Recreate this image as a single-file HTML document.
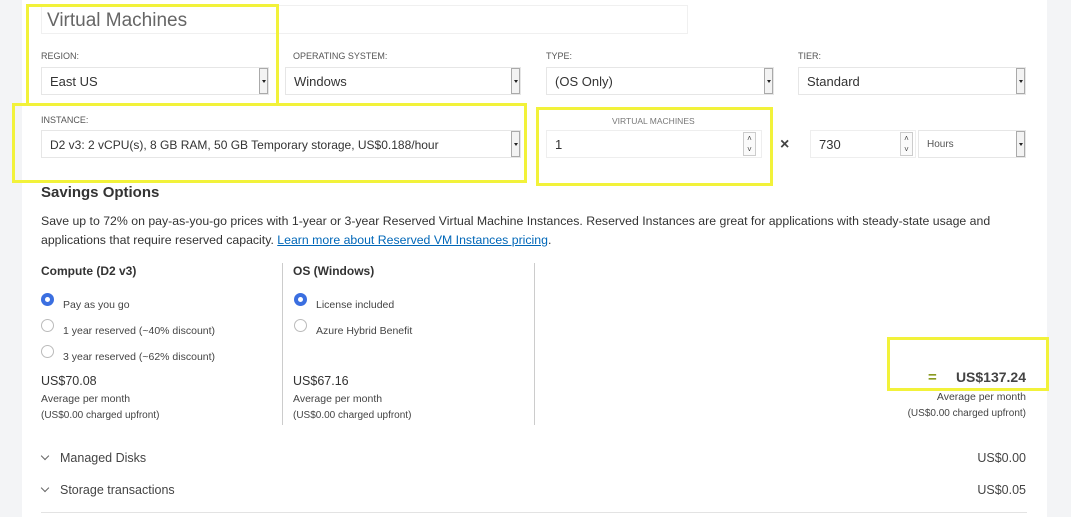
<!DOCTYPE html>
<html><head><style>
*{box-sizing:border-box;margin:0;padding:0}
body{width:1071px;height:517px;overflow:hidden;background:#f3f4f6;font-family:"Liberation Sans",sans-serif;color:#333;position:relative}
.card{position:absolute;left:22px;top:0;width:1025px;height:517px;background:#fff}
.a{position:absolute;white-space:nowrap}
.lbl{font-size:9px;color:#555;text-transform:uppercase}
.sel{position:absolute;height:28px;border:1px solid #e6e6e6;background:#fff;font-size:13px;color:#333;padding:6px 8px}
.dd{position:absolute;right:0;top:0;width:9px;height:26px;border:1px solid #aaa;background:#f3f3f3}
.dd:after{content:"";position:absolute;left:2px;top:11px;border:2px solid transparent;border-top:3px solid #222}
.spin{position:absolute;top:2px;width:13px;height:24px;border:1px solid #ccc;background:#fafafa;font-size:8px;line-height:11px;text-align:center;color:#444}
.yb{position:absolute;border:3px solid #f2f23a}
.r{position:absolute;width:13px;height:13px;border-radius:50%;border:1px solid #bbb;background:#fff}
.r.on{background:#3b6fe0;border-color:#3b6fe0}
.r.on:after{content:"";position:absolute;left:3px;top:3px;width:5px;height:5px;border-radius:50%;background:#fff}
.s{font-size:11px;color:#444}
.chev{position:absolute;width:6px;height:6px;border-right:1px solid #666;border-bottom:1px solid #666;transform:rotate(45deg)}
</style></head><body>
<div class="card"></div>
<div class="sel" style="left:41px;top:5px;width:647px;height:29px;border-color:#f0f0f0;font-size:19px;color:#666;padding:4px 5px">Virtual Machines</div>

<div class="a lbl" style="left:41px;top:51px">Region:</div>
<div class="a lbl" style="left:293px;top:51px">Operating system:</div>
<div class="a lbl" style="left:546px;top:51px">Type:</div>
<div class="a lbl" style="left:798px;top:51px">Tier:</div>
<div class="sel" style="left:41px;top:67px;width:228px">East US<div class="dd"></div></div>
<div class="sel" style="left:285px;top:67px;width:236px">Windows<div class="dd"></div></div>
<div class="sel" style="left:546px;top:67px;width:228px">(OS Only)<div class="dd"></div></div>
<div class="sel" style="left:798px;top:67px;width:228px">Standard<div class="dd"></div></div>

<div class="a lbl" style="left:41px;top:115px">Instance:</div>
<div class="sel" style="left:41px;top:130px;width:480px;font-size:12px;padding-top:7px">D2 v3: 2 vCPU(s), 8 GB RAM, 50 GB Temporary storage, US$0.188/hour<div class="dd"></div></div>
<div class="a lbl" style="left:612px;top:116px;color:#777;font-size:8.5px">Virtual machines</div>
<div class="sel" style="left:546px;top:130px;width:216px;border-color:#eee">1</div>
<div class="spin" style="left:743px;top:132px">˄<br>˅</div>
<div class="a" style="left:780px;top:136px;font-size:16px;font-weight:bold;color:#444">×</div>
<div class="sel" style="left:810px;top:130px;width:106px;border-color:#eee">730</div>
<div class="spin" style="left:900px;top:132px">˄<br>˅</div>
<div class="sel" style="left:918px;top:130px;width:108px;font-size:10px;padding-top:8px;color:#555">Hours<div class="dd"></div></div>

<div class="a" style="left:41px;top:184px;font-size:15px;font-weight:bold;color:#333">Savings Options</div>
<div class="a" style="left:41px;top:212px;font-size:12.3px;line-height:19px;color:#333;white-space:normal;width:990px">Save up to 72% on pay-as-you-go prices with 1-year or 3-year Reserved Virtual Machine Instances. Reserved Instances are great for applications with steady-state usage and applications that require reserved capacity. <span style="color:#0067b8;text-decoration:underline">Learn more about Reserved VM Instances pricing</span>.</div>

<div class="a" style="left:282px;top:263px;width:1px;height:162px;background:#ccc"></div>
<div class="a" style="left:534px;top:263px;width:1px;height:162px;background:#ccc"></div>
<div class="a" style="left:41px;top:264px;font-size:12px;font-weight:bold">Compute (D2 v3)</div>
<div class="a" style="left:293px;top:264px;font-size:12px;font-weight:bold">OS (Windows)</div>
<div class="r on" style="left:41px;top:293px"></div><div class="a s" style="left:63px;top:299px;font-size:10.5px">Pay as you go</div>
<div class="r" style="left:41px;top:319px"></div><div class="a s" style="left:63px;top:325px;font-size:10.5px">1 year reserved (~40% discount)</div>
<div class="r" style="left:41px;top:345px"></div><div class="a s" style="left:63px;top:351px;font-size:10.5px">3 year reserved (~62% discount)</div>
<div class="r on" style="left:294px;top:293px"></div><div class="a s" style="left:316px;top:299px;font-size:10.5px">License included</div>
<div class="r" style="left:294px;top:319px"></div><div class="a s" style="left:316px;top:325px;font-size:10.5px">Azure Hybrid Benefit</div>
<div class="a" style="left:41px;top:374px;font-size:12.5px">US$70.08</div>
<div class="a s" style="left:41px;top:393px;font-size:10.5px">Average per month</div>
<div class="a s" style="left:41px;top:410px;font-size:10px">(US$0.00 charged upfront)</div>
<div class="a" style="left:293px;top:374px;font-size:12.5px">US$67.16</div>
<div class="a s" style="left:293px;top:393px;font-size:10.5px">Average per month</div>
<div class="a s" style="left:293px;top:410px;font-size:10px">(US$0.00 charged upfront)</div>

<div class="a" style="left:928px;top:369px;font-size:15px;font-weight:bold;color:#8a9a20">=</div>
<div class="a" style="right:45px;top:369px;font-size:14px;font-weight:bold;color:#444">US$137.24</div>
<div class="a s" style="right:45px;top:391px;font-size:10.5px">Average per month</div>
<div class="a s" style="right:45px;top:408px;font-size:10px">(US$0.00 charged upfront)</div>

<div class="chev" style="left:42px;top:453px"></div>
<div class="a" style="left:60px;top:451px;font-size:12.5px;color:#444">Managed Disks</div>
<div class="a" style="right:45px;top:451px;font-size:12.5px;color:#444">US$0.00</div>
<div class="chev" style="left:42px;top:485px"></div>
<div class="a" style="left:60px;top:483px;font-size:12.5px;color:#444">Storage transactions</div>
<div class="a" style="right:45px;top:483px;font-size:12.5px;color:#444">US$0.05</div>
<div class="a" style="left:41px;top:512px;width:986px;height:1px;background:#e3e3e3"></div>

<div class="yb" style="left:26px;top:4px;width:253px;height:102px"></div>
<div class="yb" style="left:12px;top:103px;width:515px;height:80px"></div>
<div class="yb" style="left:536px;top:107px;width:237px;height:79px"></div>
<div class="yb" style="left:887px;top:337px;width:162px;height:54px"></div>
</body></html>
